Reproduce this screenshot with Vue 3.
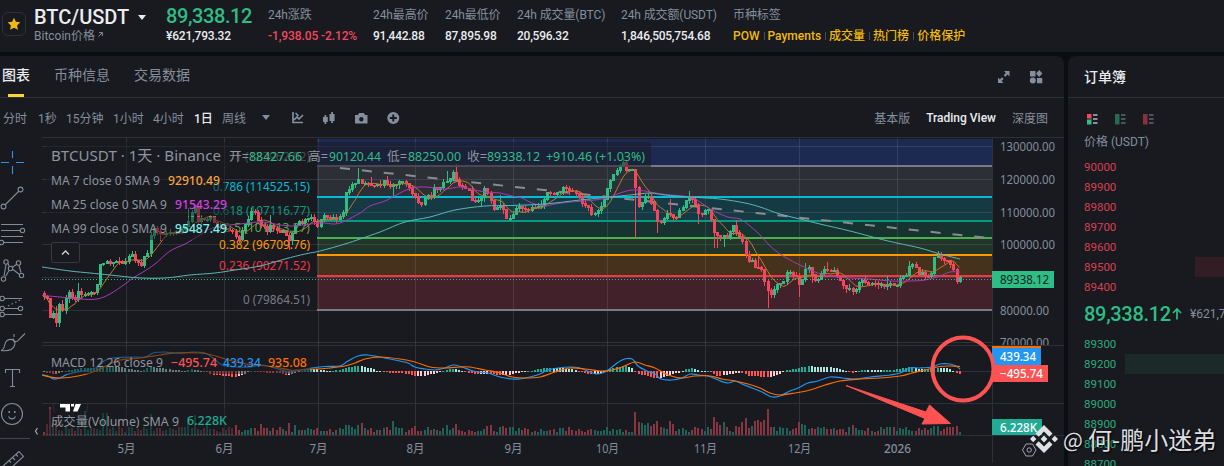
<script setup>
const stats = [
  { label: '24h涨跌', value: '-1,938.05 -2.12%', tone: 'is-down' },
  { label: '24h最高价', value: '91,442.88' },
  { label: '24h最低价', value: '87,895.98' },
  { label: '24h 成交量(BTC)', value: '20,596.32' },
  { label: '24h 成交额(USDT)', value: '1,846,505,754.68' }
]
const tags = ['POW', 'Payments', '成交量', '热门榜', '价格保护']
const intervals = ['分时', '1秒', '15分钟', '1小时', '4小时', '1日', '周线']
const asks = [90000, 89900, 89800, 89700, 89600, 89500, 89400]
const bids = [89300, 89200, 89100, 89000, 88900, 88800, 88700]
const depth = { 89500: 29, 89200: 99 }

const months = [
  [126.5, '5月', 18], [224.5, '6月', 18], [318.5, '7月', 18], [415.5, '8月', 18], [513.5, '9月', 18],
  [607.5, '10月', 23], [705.5, '11月', 23], [799.5, '12月', 23], [897.5, '2026', 27]
]
const prices = [
  [146.5, '130000.00', 55], [179.5, '120000.00', 55], [212.5, '110000.00', 55], [244.5, '100000.00', 55],
  [277.5, '', 0], [310.5, '80000.00', 49], [342.5, '70000.00', 49]
]

const zones = [
  [139, 27, '#1c2951'], [166, 31, '#2d2f37'], [197, 24, '#153a44'], [221, 17, '#163330'],
  [238, 17, '#22352a'], [255, 21, '#46321c'], [276, 34, '#43212a']
]
const levels = [
  { y: 166, text: '1 (123962.02)', color: '#787b86', w: 75, labelY: 156.5 },
  { y: 197, text: '0.786 (114525.15)', color: '#00bcd4', w: 97, labelY: 186.5 },
  { y: 221, text: '0.618 (107116.77)', color: '#089981', w: 97, labelY: 210.5 },
  { y: 238, text: '0.5 (101913.27)', color: '#4caf50', w: 86, labelY: 227.5 },
  { y: 255, text: '0.382 (96709.76)', color: '#ff9800', w: 91, labelY: 244.5 },
  { y: 276, text: '0.236 (90271.52)', color: '#f23645', w: 91, labelY: 265.5 },
  { y: 310, text: '0 (79864.51)', color: '#787b86', w: 67, labelY: 299.5 }
]

const COUNT = 292
const xAt = (i) => 43.6 + i * 3.148

function parse(text) {
  return text.trim().split(/\s+/).map((p) => p.split(',').map(Number))
}

function sample(points, x) {
  if (x <= points[0][0]) return points[0][1]
  for (let i = 1; i < points.length; i++) {
    const [x1, y1] = points[i]
    if (x <= x1) {
      const [x0, y0] = points[i - 1]
      return y0 + ((y1 - y0) * (x - x0)) / (x1 - x0)
    }
  }
  return points[points.length - 1][1]
}

function jitter(n) {
  const v = Math.sin(n * 12.9898 + 4.1) * 43758.5453
  return v - Math.floor(v)
}

const closePoints = parse(`
43,297 47,299 49.9,316 53,312 56,323 59,304 62.5,312 65.6,297 68,291 72,297 75,300 78,292 82,295 90,294 95,291
97,286 100,266 103,263 108,264 118,262 125,262 128,256 131,254 136,262 141,265 144,258 147.5,255 150.6,234 154,229
160,234 170,232 180,233 187,223 191,215 194.7,206 198,222 205,218 210,217 216,228 222,227 228,229 235,234 238.8,240
242,229 246,224 251,211 255,212 258,222 262,226 267,231 270,224 275,232 280,231 287,234 290,242 293,233 296,223
302,221 308,218 315,221 318,227 321,220 325,214 328,218 337,218 343,210 346,193 349,188 356,183 359,179 362,184
367,183 375,187 380,186 384,180 390,186 397,185 402,181 408,186 413,195 418,201 421,204 425,197 431,196 434,188
441,188 445,182 451,180 454,169 457,185 462,187 468,188 472,202 477,201 480,205 483,189 488,194 493,210 498,206
502,205 505,218 510,217 515,211 519,206 525,210 530,209 540,207 544,198 548,192 555,193 561,190 567,189 573,192
578,196 583,206 587,202 590,215 597,213 601,205 605,199 608,184 613,175 617,170 621,167 624,163 627,175 631,168
634,175 637,204 640,211 643,196 647,194 650,201 653,209 656,217 659,223 662,222 665,214 668,210 672,217 675,221
678,213 681,208 684,206 687,197 691,199 694,204 700,217 705,211 709,210 712,224 715.4,240 718.5,232 722,240
725,233 728,238 731,229 734,225 737,235 741,240 744,246 747,263 750,259 753,263 756,271 759,268 763,272 766,288
769,294 772,294 775,288 778,283 782,287 785,275 789,274 793,274 797,276 800,289 803.6,274 807,267 810,270 813,278
817,280 821,273 825,268 833,270 836,276 841,280 844,289 848,291 851,287 854,293 858,283 865,281 870,286 875,284
887,286 897,284 901,278 906,275 910,264 914,265 918,274 922,273 926,277 931,274 934.5,259 937.7,254 941,258
945,260 950,264 954,269 957,282 960,278`)

const ma25 = parse(`
42,295.5 60,297 80,299 97,299 110,294 125,284 133,278 143,272 155,264 170,251 185,244 200,235 210,229 222,226
240,224 262,222 290,226 320,223 335,224 345,221 360,213 370,206 385,201 400,193 412,188 425,187 445,189 460,187
475,190 485,192 500,193 512,196 522,198 532,203 545,206 555,204 570,202 595,200 610,197 620,193 632,190 645,191
655,193 670,195 690,197 700,202 712,210 728,217 740,219 750,226 760,235 770,246 780,254 790,260 800,265 815,272
830,276 850,278 870,279 890,281 910,281 925,280 940,276 950,272 960,272`)

const ma99 = parse(`
42,267 70,271 90,273 110,275 140,278 165,278 190,275 215,273 235,270 260,266 285,259 305,254 320,251 345,244
360,239 380,232 405,222 430,217 455,210 485,206 510,205.5 545,204 580,200 610,197 630,195 650,193 665,195 690,197
720,199 745,203 760,207 780,214 800,219 820,224 850,231 880,239 897,243 920,248 940,254 960,259`)

const macd = parse(`
42,375 48,376 54,379 60,378 68,374 78,372 88,370 98,367 104,361 112,358 130,357 145,357 153,353 165,352 175,353
185,353 192,352 205,353 213,358 222,365 235,367 250,367 262,365 275,368 285,371 292,372 300,370 312,368 325,366.5
340,366 348,361 358,356 368,355 380,357 395,360 408,363 415,367 425,369 435,370 445,368 453,365 462,367 470,370
478,372 488,373 500,377 512,379 520,379 530,377 540,374 548,370 558,368 570,367 580,368 590,372 597,374 605,372
612,367 622,360 632,359 638,366 647,371 655,374 661,379 672,380 682,378 690,374 698,375 708,376 718,380 728,383
735,381 742,384 752,388 762,392 772,397 780,396 790,391 798,388 808,383 818,381 830,377 842,378 855,379 870,377
890,375 900,373 910,368 920,368 932,367 940,364 950,364 956,366 960,369`)

const signal = parse(`
42,375 50,377 62,378 78,376 90,373 100,369 110,364 120,360 140,358 160,355 175,353 200,353 212,355 222,358
240,363 255,365 275,367 290,370 300,370 318,369 330,368 345,366 355,363 365,359 380,357 400,359 415,362 430,367
445,368 460,367 470,367 485,370 500,373 512,377 525,378 540,377 555,372 570,368 585,369 600,371 612,370 622,367
635,362 645,365 655,368 668,375 682,378 695,376 710,376 722,379 735,381 748,384 760,388 770,393 780,395 795,393
810,390 825,385 840,381 860,379 880,378 900,376 912,373 925,370 940,366.5 950,366 960,366.5`)

const histogram = parse(`
43,1 47,-2 53,-3 60,-2 65,1 75,3 85,4 95,4 102,6 115,6 125,4 137,2 142,1 150,5 160,4 175,2 185,1 192,3 200,1
207,-1 213,-4 225,-4.6 235,-6 245,-3 253,1 262,-1 270,-2 280,-2.5 288,-4 297,-1 303,2 312,3 320,2.5 330,1 340,2
350,5 358,6.4 365,5 373,3 378,1 383,-1 393,-2 405,-2.5 415,-5 425,-4.5 433,-3 440,-1 445,2 453,3.4 460,2 465,-1
478,-3 490,-2.6 500,-4 510,-3.8 518,-2 525,-1 530,1 540,3 550,4.4 560,4 570,3 576,2 580,-1 590,-3 598,-2.600
605,-1 610,3 618,5 625,6.5 632,4 636,-1 640,-4 648,-4.500 655,-7 662,-6.500 670,-4 678,-2 683,-1 686,3 692,4
698,2 703,1 709,1 712,-2 718,-5 728,-4 735,-2 742,-2 750,-5 760,-5.500 770,-6 778,-4 783,-1 786,2 795,3 803,5
808,6 818,5 832,4.500 840,3 847,1 850,-1 854,-2 857,1 865,2 880,1.600 893,2 900,3 912,5 920,3 930,3 938,4.500
948,4 952,2 955,-1 960,-3.200`)

// long wicks and volume spikes, keyed by x
const highs = parse('55,306 77,283 131,251 187,208 194,205 250,208 269,215 359,168 371,177 381,180 447,171 456,164 483,186 501,195 540,200 624,158 627,161 670,199 689,191 736,220 759,256 806,263 828,262 866,275 888,276 910,261 937,251')
const lows = parse('55,327 58,327 160,241 240,243 290,250 321,228 393,196 417,204 480,206 512,216 590,216 636,238 658,233 699,224 715,248 718,248 724,247 768,308 799,297 812,283 846,293 854,295 878,289 957,284')
const spikes = parse('50,28 47,11 53,12 56,14 84,24 105,22 120,15 150,21 187,18 194,20 207,15 236,10 261,11 289,12 294,10 346,10 349,10 359,10 362,12 393,14 447,10 456,11 488,9 491,10 415,9 503,9 635,23 638,13 641,12 644,10 648,12 651,9 655,11 658,14 670,14 673,11 714,18 717,13 720,10 724,13 736,9 743,13 746,17 752,9 755,14 758,15 762,13 765,15 768,26 799,13 802,11 805,10 825,8 853,10 887,8 932,7 935,9 938,9 957,9 960,3')

function near(list, x) {
  const hit = list.find((p) => Math.abs(p[0] - x) < 1.6)
  return hit ? hit[1] : null
}

const closes = []
for (let i = 0; i < COUNT; i++) {
  closes.push(sample(closePoints, xAt(i)) + (jitter(i) - 0.5) * 3.6)
}

const candles = closes.map((close, i) => {
  const x = xAt(i)
  const open = i ? closes[i - 1] : close - 3
  const top = Math.min(open, close)
  const bottom = Math.max(open, close)
  const high = near(highs, x) ?? top - jitter(i + 400) * 4
  const low = near(lows, x) ?? bottom + jitter(i + 900) * 4
  return {
    x: Math.round(x),
    y: Math.floor(top),
    h: Math.max(2, Math.ceil(bottom) - Math.floor(top)),
    high: Math.min(high, top),
    wick: Math.max(low, bottom) - Math.min(high, top),
    vol: near(spikes, x) ?? Math.round(3 + jitter(i + 50) * 5.5),
    up: close < open
  }
})

let lastDiff = 0
const bars = candles.map((c, i) => {
  const diff = sample(histogram, xAt(i))
  const rising = diff >= lastDiff
  lastDiff = diff
  const h = Math.max(1, Math.round(Math.abs(diff)))
  let fill = rising ? '#22ab94' : '#ace5dc'
  if (diff < 0) fill = rising ? '#fccbcd' : '#ff5252'
  return { x: c.x, y: diff < 0 ? 371 : 372 - h, h, fill }
})

const ma7Line = closes.map((c, i) => {
  const part = closes.slice(Math.max(0, i - 6), i + 1)
  const avg = part.reduce((a, b) => a + b, 0) / part.length
  return `${xAt(i).toFixed(1)},${avg.toFixed(1)}`
}).join(' ')

// Catmull-Rom through the points
function smooth(pts) {
  let d = `M${pts[0]}`
  for (let i = 0; i < pts.length - 1; i++) {
    const a = pts[i - 1] || pts[i]
    const b = pts[i]
    const c = pts[i + 1]
    const e = pts[i + 2] || c
    d += `C${b[0] + (c[0] - a[0]) / 6},${b[1] + (c[1] - a[1]) / 6} ${c[0] - (e[0] - b[0]) / 6},${c[1] - (e[1] - b[1]) / 6} ${c}`
  }
  return d
}

const averages = [
  { y: 180.5, label: 'MA 7 close 0 SMA 9', w: 109, value: '92910.49', x: 168, color: '#f7a240' },
  { y: 204.5, label: 'MA 25 close 0 SMA 9', w: 116, value: '91543.29', x: 175, color: '#d63ee0' },
  { y: 228.5, label: 'MA 99 close 0 SMA 9', w: 116, value: '95487.49', x: 175, color: '#7df0f0' }
]
const ohlc = [
  [229, 20, '开=', 0], [249, 53, '88427.66', 1], [308, 20, '高=', 0], [329, 52, '90120.44', 1],
  [387, 20, '低=', 0], [408, 53, '88250.00', 1], [467, 20, '收=', 0], [487, 53, '89338.12', 1],
  [546, 99, '+910.46 (+1.03%)', 1]
]
</script>

<template>
  <div class="page">
    <header class="ticker">
      <div class="star">
        <svg width="14" height="14" viewBox="0 0 14 14"><path d="M7 .7l1.9 4 4.4.6-3.2 3.1.8 4.4L7 10.7l-3.9 2.1.8-4.4L.7 5.3l4.4-.6z" fill="#f0b90b" /></svg>
      </div>
      <div class="pair">
        <div class="pair-name">BTC/USDT<i class="caret" /></div>
        <div class="pair-link">
          Bitcoin价格
          <svg width="5" height="8" viewBox="0 0 5 8"><path d="M.4 4.6L4.2.8M1 .6h3.4V4" fill="none" stroke="#848e9c" /></svg>
        </div>
      </div>
      <div class="last">
        <div class="last-price">89,338.12</div>
        <div class="last-fiat">¥621,793.32</div>
      </div>
      <div v-for="s in stats" :key="s.label" class="stat">
        <span>{{ s.label }}</span>
        <b :class="s.tone">{{ s.value }}</b>
      </div>
      <div class="stat">
        <span>币种标签</span>
        <div class="tags"><b v-for="t in tags" :key="t">{{ t }}</b></div>
      </div>
    </header>

    <main class="body">
      <section class="panel chart-panel">
        <nav class="tabs">
          <span class="active">图表</span><span>币种信息</span><span>交易数据</span>
          <svg class="tab-icons" width="46" height="14" viewBox="0 0 46 14" fill="#848e9c">
            <path d="M7 1h5.5v5.500L10.500 4.600 8.300 6.800 6.700 5.200 8.900 3zM1 13V7.500l1.900 1.900L5 7.300l1.600 1.600-2.100 2.100 2 2z" />
            <path d="M33 1h5.500v5.500H33zM42.200 0l3.200 3.500-3.200 3.500L39 3.500zM40 8h5.300v5.300H40z" /><circle cx="35.800" cy="10.500" r="3" />
          </svg>
        </nav>
        <div class="toolbar">
          <span v-for="t in intervals" :key="t" :class="{ active: t === '1日' }">{{ t }}</span>
          <i class="caret" />
          <svg class="tools" width="110" height="14" viewBox="0 0 110 14" fill="none" stroke="#848e9c">
            <path d="M2 1v10.500h10M3 9l3-3 2 2 4-4M4.500 2l3 3" stroke-width="1.700" />
            <g fill="#848e9c" stroke="none">
              <path d="M32 6h1.500V4h1.800v2h1.500v5h-1.500v2h-1.800v-2H32zM38.500 3h1.700V1h1.800v2h1.600v7h-1.600v2h-1.800v-2h-1.700z" />
              <path fill-rule="evenodd" d="M64 4h2.800l1.400-2h4.600l1.400 2h2.300v8.500H64zM70.300 6a2.200 2.200 0 100 4.400 2.200 2.200 0 000-4.400z" />
              <path fill-rule="evenodd" d="M102.300 1a6 6 0 100 12 6 6 0 000-12zM101.300 3.500h2V6h2.500v2h-2.500v2.500h-2V8h-2.500V6h2.500z" />
            </g>
          </svg>
          <div class="views"><span>基本版</span><span class="active">Trading View</span><span>深度图</span></div>
        </div>

        <div class="workspace">
          <svg class="draw-tools" width="42" height="329" viewBox="0 137 42 329" fill="none" stroke="#848b98" stroke-width="1.100">
            <path stroke="#2196f3" d="M12.500 151v7M12.500 166v8M1 162.500h8M16 162.500h8" />
            <path d="M5.500 204.500L18.500 191.500" /><circle cx="20.500" cy="189.500" r="2.400" /><circle cx="3.500" cy="206.500" r="2.400" />
            <path d="M1 224.500h22M1 230.500h19M1 236.500h22M4 242.500h19" /><circle cx="22.500" cy="230.500" r="2.200" /><circle cx="1.500" cy="242.500" r="2.200" />
            <path d="M6 264.500L4 276M8 263.500l1 2.500M12.500 267l4-2.500M19 265.500l2 7M9 270.500l-3.500 6M13 269.500l6.500 5" />
            <circle cx="6" cy="262" r="2.200" /><circle cx="18.500" cy="263" r="2.200" /><circle cx="10.500" cy="268.500" r="2.200" /><circle cx="3.500" cy="279" r="2.200" /><circle cx="21.500" cy="275.500" r="2.200" />
            <path d="M5 298.500h17M5 308.500h13M5 314.500h17" /><circle cx="2.200" cy="298.500" r="2.200" /><circle cx="2.200" cy="308.500" r="2.200" /><circle cx="20.500" cy="308.500" r="2.200" /><circle cx="2.200" cy="314.500" r="2.200" />
            <path d="M8 306l12-6" stroke-dasharray="1.500 2.500" />
            <path d="M1 350.500c5-1 2-7 6-10 5-3 9 1 7.500 5s-6 6-13.500 5zM13 338.500c1 4 4 4 6 1l6-6M14 334v3" />
            <path d="M5.500 373v-3.500h14v3.500M12.500 369.500v17M10 386.500h5" />
            <circle cx="12" cy="414" r="10.500" /><path d="M8.500 416.500c1.500 3.200 5.500 3.200 7 0" /><path d="M8.500 412h1.500M14 412h1.500" stroke-width="1.800" />
            <path d="M0 438.500h30" stroke="#434651" />
            <path d="M3 466l16-14.500 4.500 5L13 466M16 454.500l2 2M12.500 457.500l2.500 2.500M9 460.500l2 2" />
            <path d="M37.500 428l-2 3 2 3.500" stroke="#b2b5be" />
          </svg>

          <svg class="chart" width="1022" height="329" viewBox="42 137 1022 329">
            <clipPath id="axis-clip"><path d="M990 138h74v207h-74z" /></clipPath>
            <path d="M42 137.500h1022" stroke="#2b3139" />

            <g shape-rendering="crispEdges">
              <rect v-for="z in zones" :key="z[0]" x="317" :y="z[0]" width="675" :height="z[1]" :fill="z[2]" />
            </g>
            <g stroke="#8b95a8" stroke-opacity=".2" shape-rendering="crispEdges">
              <path v-for="m in months" :key="m[1]" :d="`M${m[0]} 138V435`" />
              <path v-for="p in prices" :key="p[0]" :d="`M42 ${p[0]}H992`" />
              <path d="M42 371.500H992" />
            </g>
            <path d="M42 345.500h1022M42 403.500h1022M42 435.500h1022M992.500 138v325" stroke="#2b313b" shape-rendering="crispEdges" />

            <g class="fib">
              <template v-for="l in levels" :key="l.y">
                <path :d="`M317 ${l.y}H992`" :stroke="l.color" stroke-width="2" />
                <text :x="310 - l.w" :y="l.labelY + 4.500" :textLength="l.w" lengthAdjust="spacingAndGlyphs" :fill="l.color">{{ l.text }}</text>
              </template>
            </g>
            <path d="M340 168L985 237.700" stroke="#8b8b95" stroke-width="2" stroke-dasharray="10 12" />

            <g shape-rendering="crispEdges">
              <g v-for="c in candles" :key="c.x" :fill="c.up ? '#2ebd85' : '#f6465d'">
                <rect :x="c.x" :y="c.high" width="1" :height="c.wick" />
                <rect :x="c.x - 1" :y="c.y" width="3" :height="c.h" />
                <rect :x="c.x - 1" :y="435 - c.vol" width="2" :height="c.vol" :fill="c.up ? '#1d6358' : '#873641'" />
              </g>
              <rect v-for="b in bars" :key="b.x" :x="b.x - 1" :y="b.y" width="2" :height="b.h" :fill="b.fill" />
            </g>

            <g fill="none">
              <polyline :points="ma7Line" stroke="#b87c30" />
              <path :d="smooth(ma25)" stroke="#a83bb5" />
              <path :d="smooth(ma99)" stroke="#5bb5b5" />
              <path :d="smooth(macd)" stroke="#2196f3" stroke-width="1.200" />
              <path :d="smooth(signal)" stroke="#ff6d00" stroke-width="1.200" />
            </g>
            <path d="M42 279.500h950" stroke="#2ebd85" stroke-dasharray="1 2" shape-rendering="crispEdges" />

            <path class="legend-bg" d="M46 142h605v25H46zM46 169h180v23H46zM46 193h184v23H46zM46 217h184v23H46zM46 351h264v23H46zM46 409h187v25H46z" />
            <path d="M53.500 404c-.500 3 0 6 1.500 9M87.500 404c.500 3 0 6-1.500 9" stroke="#2a2e39" fill="none" />
            <path d="M60 404h10v7.500h-4.500v-4H60zM75.500 404h5.500l-3.500 7.500H73zM71 404h3v2.500h-3z" fill="#fff" />

            <g class="legend">
              <text x="51" y="161" class="title" textLength="170" lengthAdjust="spacingAndGlyphs">BTCUSDT · 1天 · Binance</text>
              <text v-for="o in ohlc" :key="o[0]" :x="o[0]" y="161" :textLength="o[1]" lengthAdjust="spacingAndGlyphs" :class="{ up: o[3] }">{{ o[2] }}</text>
              <template v-for="a in averages" :key="a.y">
                <text x="51" :y="a.y + 4.500" :textLength="a.w" lengthAdjust="spacingAndGlyphs">{{ a.label }}</text>
                <text :x="a.x" :y="a.y + 4.500" textLength="52" lengthAdjust="spacingAndGlyphs" :style="{ fill: a.color }" class="strong">{{ a.value }}</text>
              </template>
              <text x="51" y="367" textLength="112" lengthAdjust="spacingAndGlyphs">MACD 12 26 close 9</text>
              <text x="171" y="367" textLength="46" lengthAdjust="spacingAndGlyphs" class="strong red">−495.74</text>
              <text x="223" y="367" textLength="38" lengthAdjust="spacingAndGlyphs" class="strong blue">439.34</text>
              <text x="268" y="367" textLength="39" lengthAdjust="spacingAndGlyphs" class="strong orange">935.08</text>
              <text x="51" y="425.500" textLength="128" lengthAdjust="spacingAndGlyphs">成交量(Volume) SMA 9</text>
              <text x="187" y="425" textLength="40" lengthAdjust="spacingAndGlyphs" class="strong teal">6.228K</text>
            </g>
            <rect x="51.500" y="242.500" width="28" height="20" rx="2" fill="#181a20" stroke="#363a45" />
            <path d="M62 254.500l3.500-3.500 3.500 3.500" fill="none" stroke="#d1d4dc" stroke-width="1.300" />

            <g class="axis" clip-path="url(#axis-clip)">
              <template v-for="p in prices" :key="p[0]">
                <text v-if="p[1]" x="1000" :y="p[0] + 4" :textLength="p[2]" lengthAdjust="spacingAndGlyphs">{{ p[1] }}</text>
              </template>
            </g>
            <g class="axis">
              <text v-for="m in months" :key="m[1]" :x="m[0] - m[2] / 2" y="453" :textLength="m[2]" lengthAdjust="spacingAndGlyphs" :class="{ strong: m[1] === '2026' }">{{ m[1] }}</text>
            </g>
            <g class="marks">
              <path d="M992 271h62v17h-62z" fill="#2ebd85" /><text x="1000" y="284" textLength="49" lengthAdjust="spacingAndGlyphs" class="dark">89338.12</text>
              <path d="M992 346h49v5h-49z" fill="#ff6d00" />
              <path d="M992 348h49v17h-49z" fill="#2196f3" /><text x="1000" y="361" textLength="36" lengthAdjust="spacingAndGlyphs">439.34</text>
              <path d="M992 365h56v17h-56z" fill="#ff5252" /><text x="1000" y="378" textLength="43" lengthAdjust="spacingAndGlyphs">−495.74</text>
              <path d="M992 419h50v16h-50z" fill="#22ab94" /><text x="1000" y="432" textLength="37" lengthAdjust="spacingAndGlyphs">6.228K</text>
            </g>

            <ellipse cx="963" cy="369" rx="30.500" ry="31.500" fill="none" stroke="#ff5252" stroke-width="4" />
            <path d="M846 385.500L926 412 929.500 405 950.500 423.500 922 424 925 418.500Z" fill="#ff5252" stroke="#ff5252" stroke-linejoin="round" />
            <path d="M1022.500 450l3.500-6h6.500l3.500 6-3.500 6H1026z" fill="none" stroke="#a0a4ad" /><circle cx="1029.200" cy="450" r="2.200" fill="none" stroke="#a0a4ad" />
          </svg>
        </div>
      </section>

      <section class="panel book">
        <h3>订单簿</h3>
        <div class="book-icons">
          <svg v-for="(c, i) in [['#f6465d', '#2ebd85'], ['#2ebd85', '#2ebd85'], ['#f6465d', '#f6465d']]" :key="i" :class="{ off: i }" width="12" height="12" viewBox="0 0 12 12">
            <path :fill="c[0]" d="M1 1h4.500v5H1z" /><path :fill="c[1]" d="M1 6h4.500v5.500H1z" />
            <path v-if="!i" d="M1 6h4.500" stroke="#181a20" />
            <path d="M7 1h4.500v2H7zM7 5h4.500v2H7zM7 9h4.500v2H7z" fill="#848e9c" />
          </svg>
        </div>
        <div class="book-head">价格 (USDT)</div>
        <div v-for="p in asks" :key="p" class="row ask"><i v-if="depth[p]" :style="{ width: depth[p] + 'px' }" />{{ p }}</div>
        <div class="mid"><b>89,338.12</b><svg width="12" height="14" viewBox="0 0 12 14"><path d="M6 12.500V2M2 6L6 2l4 4" fill="none" stroke="#2ebd85" stroke-width="1.700" /></svg><span>¥621,793.32</span></div>
        <div v-for="p in bids" :key="p" class="row bid"><i v-if="depth[p]" :style="{ width: depth[p] + 'px' }" />{{ p }}</div>
      </section>
    </main>

    <div class="watermark">
      <svg width="28" height="28" viewBox="0 0 28 28" fill="#e0e1e3">
        <path d="M14 0l8.500 8.500-3.200 3.200L14 6.400l-5.300 5.300-3.200-3.200zM14 28l8.500-8.500-3.200-3.200-5.300 5.300-5.300-5.300-3.200 3.200zM3.200 10.800L6.400 14l-3.200 3.200L0 14zM24.800 10.800L28 14l-3.200 3.200-3.200-3.200zM14 10.600l3.400 3.400-3.400 3.400-3.400-3.400z" />
      </svg>
      <span class="at">@</span><span>何-鹏小迷弟</span>
    </div>
  </div>
</template>

<style>
body {
  background: #0b0e11;
  overflow: hidden;
}
</style>

<style scoped>
.page {
  position: relative;
  display: flex;
  flex-direction: column;
  gap: 4px;
  width: 1224px;
  height: 466px;
  overflow: hidden;
  color: #eaecef;
  background: #0b0e11;
  font-family: Roboto, "Noto Sans CJK SC", sans-serif;
  font-size: 12px;
  white-space: nowrap;
}

.ticker {
  display: grid;
  grid-template-columns: 32px 132px 102px 105px 72px 72px 104px 112px 1fr;
  height: 52px;
  padding-left: 2px;
  box-sizing: border-box;
  background: #181a20;
}

.star {
  display: flex;
  align-items: center;
  justify-content: center;
  width: 22px;
  height: 22px;
  margin-top: 12px;
  border: 1px solid #2b3139;
  border-radius: 6px;
}

.pair-name {
  display: flex;
  align-items: center;
  height: 24px;
  margin-top: 5px;
  font-size: 20px;
  font-weight: 500;
}

.caret {
  width: 0;
  height: 0;
  border: 4px solid transparent;
  border-top: 5px solid #848e9c;
  border-bottom: 0;
}

.pair-name .caret {
  margin-left: 9px;
  border-top-color: #eaecef;
}

.pair-link {
  height: 14px;
  line-height: 14px;
  color: #848e9c;
}

.last-price {
  height: 24px;
  margin-top: 5px;
  color: #2ebd85;
  font-size: 20px;
  font-weight: 500;
  line-height: 23px;
  letter-spacing: -0.4px;
}

.last-fiat {
  line-height: 14px;
  font-weight: 500;
  letter-spacing: -0.2px;
}

.stat {
  display: flex;
  flex-direction: column;
  padding-top: 6px;
}

.stat span {
  height: 22px;
  color: #848e9c;
  line-height: 18px;
  letter-spacing: -0.1px;
}

.stat b {
  font-weight: 500;
  line-height: 16px;
  letter-spacing: -0.25px;
}

.stat .is-down {
  color: #f6465d;
  letter-spacing: -0.1px;
}

.stat .tags b {
  color: #f0b90b;
  letter-spacing: 0;
}

.tags b + b {
  margin-left: 4px;
  padding-left: 4px;
  background: linear-gradient(#474d57, #474d57) 0 50% / 1px 8px no-repeat;
}

.body {
  display: grid;
  grid-template-columns: 1064px 1fr;
  gap: 4px;
  height: 410px;
}

.panel {
  overflow: hidden;
  background: #181a20;
}

.chart-panel {
  border-radius: 0 8px 0 0;
}

.tabs {
  display: grid;
  grid-template-columns: 52px 80px 1fr auto;
  height: 42px;
  padding: 0 21px 0 2px;
  box-sizing: border-box;
  border-bottom: 1px solid #2b3139;
  color: #848e9c;
  font-size: 14px;
  line-height: 38px;
}

.tabs .active {
  color: #eaecef;
  font-weight: 500;
  background: linear-gradient(#fcd535, #fcd535) 6px 100% / 16px 3px no-repeat;
}

.tab-icons {
  margin-top: 14px;
}

.toolbar {
  display: grid;
  grid-template-columns: 35px 28px 47px 40px 41px 28px 40px 29px 1fr auto;
  align-items: center;
  height: 39px;
  padding: 0 16px 0 3px;
  color: #848e9c;
}

.toolbar .active {
  color: #eaecef;
  font-weight: 500;
}

.views {
  display: flex;
  align-items: center;
  gap: 16px;
}

.workspace {
  display: flex;
  height: 329px;
}

.chart text {
  font-family: "Noto Sans", "Noto Sans CJK SC", sans-serif;
  font-size: 12px;
}

.legend-bg {
  fill: #181a20;
  fill-opacity: 0.5;
}

.legend text {
  fill: #8f949f;
}

.legend .title {
  font-size: 15px;
}

.legend .up {
  fill: #2ebd85;
}

.chart .strong {
  font-weight: 500;
}

.legend .red {
  fill: #ff5252;
}

.legend .blue {
  fill: #2196f3;
}

.legend .orange {
  fill: #ff6d00;
}

.legend .teal {
  fill: #22ab94;
}

.axis text {
  fill: #848e9c;
}

.marks text {
  fill: #fff;
  font-weight: 500;
}

.marks .dark {
  fill: #10251d;
  font-weight: 400;
}

.book {
  border-radius: 8px 0 0 0;
}

.book h3 {
  height: 41px;
  margin: 0;
  padding-left: 16px;
  border-bottom: 1px solid #2b3139;
  font-size: 14px;
  font-weight: 500;
  line-height: 43px;
}

.book-icons {
  display: flex;
  gap: 16px;
  height: 12px;
  padding: 15px 0 0 18px;
}

.book-icons .off {
  opacity: 0.5;
}

.book-head {
  height: 32px;
  padding-left: 16px;
  color: #848e9c;
  line-height: 34px;
}

.row {
  position: relative;
  height: 20px;
  padding-left: 16px;
  font-size: 11.5px;
  line-height: 20px;
}

.row i {
  position: absolute;
  top: 0;
  right: 0;
  height: 20px;
}

.ask {
  color: #d63f53;
}

.ask i {
  background: #321d25;
}

.bid {
  color: #2bab7a;
}

.bid i {
  background: #1b2a28;
}

.mid {
  display: flex;
  align-items: center;
  height: 34px;
  padding: 0 0 3px 16px;
  color: #848e9c;
}

.mid b {
  color: #2ebd85;
  font-size: 20px;
  font-weight: 500;
  letter-spacing: -0.3px;
}

.mid svg {
  flex: none;
}

.mid span {
  margin-left: 7px;
}

.watermark {
  position: absolute;
  top: 424px;
  left: 1030px;
  display: flex;
  align-items: center;
  height: 30px;
  color: #dcdde0;
  font: 24px/30px "Noto Sans CJK SC", sans-serif;
  text-shadow: 1px 1px 2px #000;
}

.watermark .at {
  margin: 0 5px 0 5px;
  font-size: 21px;
}
</style>
